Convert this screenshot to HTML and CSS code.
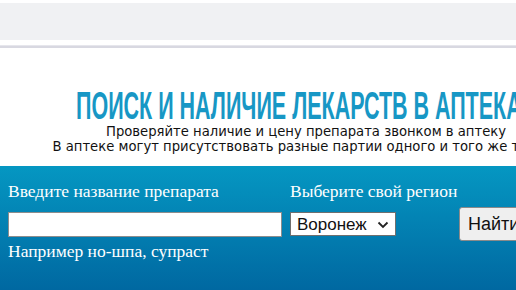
FILE: index.html
```html
<!DOCTYPE html>
<html>
    <head>
        <title>Поиск лекарств</title>
        <meta name='viewport' content='width=device-width, initial-scale=1.0'>
        <link rel="stylesheet" href="styles.css">
    </head>
    <body>
        <div class='page'>
            <div class='topbar'></div>
            <div class='rule'></div>
            <div class='intro'>
                <h1><span class='title'>ПОИСК И НАЛИЧИЕ ЛЕКАРСТВ В АПТЕКАХ</span></h1>
                <p>Проверяйте наличие и цену препарата звонком в аптеку<br>В аптеке могут присутствовать разные партии одного и того же товара</p>
            </div>
            <div class='search'>
                <form class='searchForm' onsubmit='return false'>
                    <label class='label' for='drug'>Введите название препарата</label>
                    <label class='label' for='region'>Выберите свой регион</label>
                    <span></span>
                    <input type='text' class='drugInput' name='drug' id='drug'>
                    <span class='selectWrap'>
                        <select class='regionSelect' name='region' id='region'>
                            <option>Воронеж</option>
                            <option>Москва</option>
                            <option>Липецк</option>
                        </select>
                        <svg class='chevron' width='12' height='8' viewBox='0 0 12 8'>
                            <path d='M1.5 1.5 L6 6 L10.5 1.5' fill='none' stroke='#222' stroke-width='1.8'/>
                        </svg>
                    </span>
                    <button type='submit' class='button'>Найти</button>
                    <div class='hint'>Например но-шпа, супраст</div>
                </form>
            </div>
        </div>
    </body>
</html>
```

FILE: styles.css
```css
* {
    margin: 0;
    box-sizing: border-box;
}

html {
    overflow: hidden;
}

body {
    background: white;
    font-family: "DejaVu Sans", Verdana, sans-serif;
}

.page {
    width: 612px;
    padding-top: 3px;
}

.topbar {
    height: 37px;
    background: #f0f1f3;
}

.rule {
    margin-top: 5px;
    height: 3px;
    background: #d8d8e1;
    border-top: 1px solid #e6e6ec;
}

.intro {
    text-align: center;
    padding-top: 41px;
    padding-bottom: 12px;
}

.intro > h1 {
    display: flex;
    justify-content: center;
    font-family: "Liberation Sans", Arial, sans-serif;
    font-size: 38px;
    line-height: 34px;
    font-weight: 700;
    color: #1797c5;
    white-space: nowrap;
}

.title {
    display: inline-block;
    transform: scaleX(0.565);
}

.intro > p {
    margin-top: 1px;
    font-size: 13.2px;
    line-height: 15px;
    color: #111;
    white-space: nowrap;
}

.search {
    min-height: 124px;
    background: linear-gradient(#0597c2, #0068a1);
    padding: 15px 8px 0 8px;
}

.searchForm {
    display: grid;
    grid-template-columns: 282px 169px auto;
    align-items: center;
    font-family: "Liberation Serif", "Times New Roman", serif;
    font-size: 17.5px;
    color: white;
}

.label {
    line-height: 20px;
    margin-bottom: 6px;
}

.drugInput {
    width: 274px;
    height: 25px;
    border: 1px solid #8d8d8d;
    background: white;
    outline: 0;
}

.selectWrap {
    position: relative;
    width: 106px;
    height: 24px;
}

.regionSelect {
    -webkit-appearance: none;
    appearance: none;
    width: 106px;
    height: 24px;
    font-family: "Liberation Sans", Arial, sans-serif;
    font-size: 17px;
    color: #111;
    background: white;
    border: 1px solid #6f6f6f;
    border-radius: 0;
    padding-left: 6px;
    outline: 0;
}

.chevron {
    position: absolute;
    left: 87px;
    top: 9px;
    pointer-events: none;
}

.button {
    justify-self: start;
    height: 34px;
    padding: 0 8px;
    font-family: "Liberation Sans", Arial, sans-serif;
    font-size: 18px;
    color: #111;
    background: #efefef;
    border: 1px solid #8a8a8a;
    border-radius: 3px;
    cursor: pointer;
}

.hint {
    grid-column: 1 / 4;
    line-height: 20px;
}
```
